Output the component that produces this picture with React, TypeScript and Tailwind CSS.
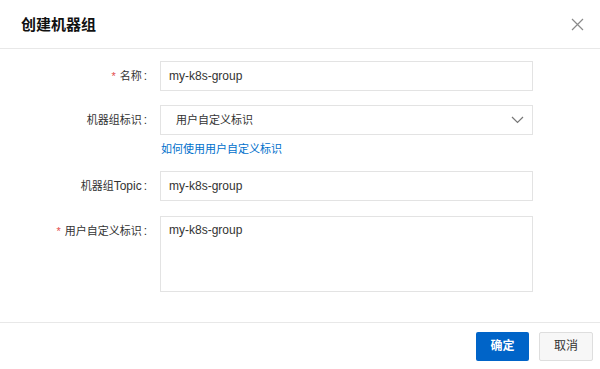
import React from "react";

const font = { fontFamily: '"Liberation Sans", "Noto Sans CJK SC", sans-serif' };

function Label({ children, required, top }: { children: React.ReactNode; required?: boolean; top?: boolean }) {
  return (
    <div
      className={`w-[148px] shrink-0 flex justify-end ${top ? "items-start pt-[7px]" : "items-center"} text-[11px] leading-[16px] text-[#333]`}
    >
      {required && <span className="text-[#e34b4b] mr-[4px] text-[11px]">*</span>}
      <span>{children}</span>
      <span className="ml-[2px] mr-[1px] text-[12px]">:</span>
    </div>
  );
}

export default function App() {
  return (
    <div className="w-[600px] h-[369px] bg-white flex flex-col overflow-hidden" style={font}>
      <div className="h-[49px] flex items-center justify-between pl-[21px] pr-[16px] border-b border-[#e8e8e8] shrink-0">
        <div className="text-[15px] font-bold text-[#111] leading-[20px] mt-[2px]">创建机器组</div>
        <svg width="13" height="13" viewBox="0 0 13 13" className="mt-[1px]">
          <path d="M1 1L12 12M12 1L1 12" stroke="#8a8a8a" strokeWidth="1.2" />
        </svg>
      </div>
      <div className="flex-1 flex flex-col pt-[12px]">
        <div className="flex gap-[12px]">
          <Label required>名称</Label>
          <div className="w-[373px] h-[30px] border border-[#e3e3e3] flex items-center px-[8px] text-[12px] text-[#333]">
            my-k8s-group
          </div>
        </div>
        <div className="flex gap-[12px] mt-[14px]">
          <Label>机器组标识</Label>
          <div className="w-[373px] h-[30px] border border-[#e3e3e3] flex items-center justify-between pl-[15px] pr-[8px] text-[11px] text-[#333]">
            <span>用户自定义标识</span>
            <svg width="13" height="8" viewBox="0 0 13 8">
              <path d="M1 1L6.5 6.5L12 1" stroke="#777" strokeWidth="1.2" fill="none" />
            </svg>
          </div>
        </div>
        <div className="flex gap-[12px] mt-[6px]">
          <div className="w-[148px] shrink-0" />
          <div className="text-[11px] leading-[16px] text-[#0070cc] ml-[1px]">如何使用用户自定义标识</div>
        </div>
        <div className="flex gap-[12px] mt-[14px]">
          <Label>
            机器组<span className="text-[12px]">Topic</span>
          </Label>
          <div className="w-[373px] h-[30px] border border-[#e3e3e3] flex items-center px-[8px] text-[12px] text-[#333]">
            my-k8s-group
          </div>
        </div>
        <div className="flex gap-[12px] mt-[15px]">
          <Label required top>用户自定义标识</Label>
          <div className="w-[373px] h-[76px] border border-[#e3e3e3] px-[8px] pt-[5px] text-[12px] leading-[16px] text-[#333]">
            my-k8s-group
          </div>
        </div>
      </div>
      <div className="h-[47px] border-t border-[#e8e8e8] flex items-center justify-end gap-[10px] pr-[7px] shrink-0">
        <div className="w-[53px] h-[29px] bg-[#0064c8] rounded-[2px] flex items-center justify-center text-white text-[12px] font-bold">
          确定
        </div>
        <div className="w-[54px] h-[29px] bg-[#f7f7f7] border border-[#dedede] rounded-[2px] flex items-center justify-center text-[#333] text-[12px]">
          取消
        </div>
      </div>
    </div>
  );
}
